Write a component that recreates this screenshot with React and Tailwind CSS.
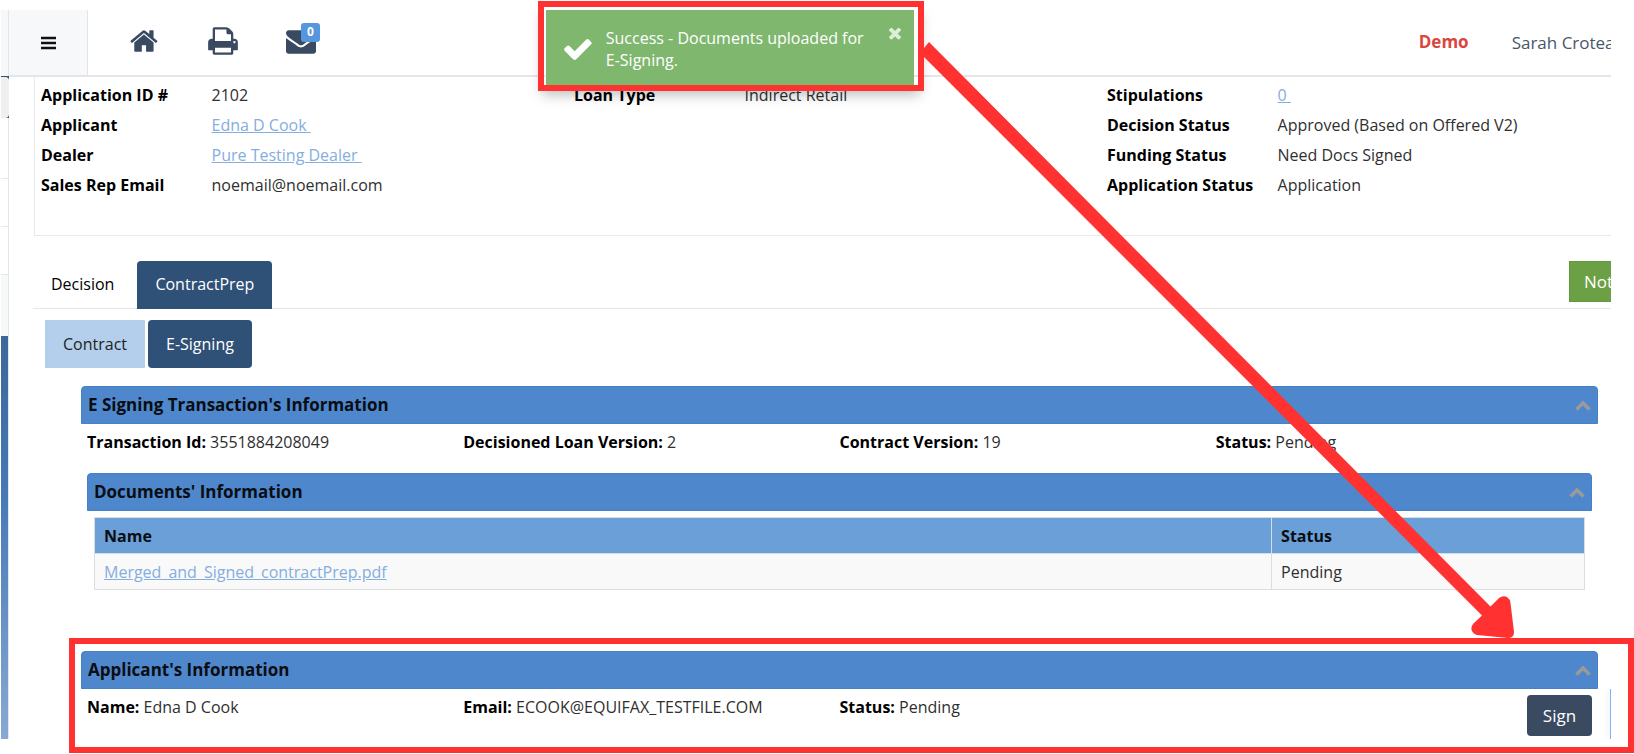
const RED = "#ff3131";

const ICONS = {
  home: "M1408 992v480q0 26-19 45t-45 19h-384v-384h-256v384h-384q-26 0-45-19t-19-45v-480q0-1 .5-3t.5-3l575-474 575 474q1 2 1 6zm223-69l-62 74q-8 9-21 11h-3q-13 0-21-7l-692-577-692 577q-12 8-24 7-13-2-21-11l-62-74q-8-10-7-23.5t11-21.5l719-599q32-26 76-26t76 26l244 204v-195q0-14 9-23t23-9h192q14 0 23 9t9 23v408l219 182q10 8 11 21.5t-7 23.5z",
  print: "M448 1536h896v-256h-896v256zm0-640h896v-384h-160q-40 0-68-28t-28-68v-160h-640v640zm1152 64q0-26-19-45t-45-19-45 19-19 45 19 45 45 19 45-19 19-45zm128 0v416q0 13-9.5 22.5t-22.5 9.5h-224v160q0 40-28 68t-68 28h-960q-40 0-68-28t-28-68v-160h-224q-13 0-22.5-9.5t-9.5-22.5v-416q0-79 56.5-135.5t135.5-56.5h64v-544q0-40 28-68t68-28h672q40 0 88 20t76 48l152 152q28 28 48 76t20 88v256h64q79 0 135.5 56.5t56.5 135.5z",
  mail: "M1792 710v794q0 66-47 113t-113 47h-1472q-66 0-113-47t-47-113v-794q44 49 101 87 362 246 497 345 57 42 92.5 65.5t94.5 48 110 24.5h2q51 0 110-24.5t94.5-48 92.5-65.5q170-123 498-345 57-39 100-87zm0-294q0 79-49 151t-122 123q-376 261-468 325-10 7-42.5 31t-54 38.5-52 32.5-57.5 27-50 9h-2q-23 0-50-9t-57.5-27-52-32.5-54-38.5-42.5-31q-91-64-262-182.5t-205-142.5q-62-42-117-115.5t-55-136.5q0-78 41.5-130t118.5-52h1472q65 0 112.5 47t47.5 113z",
  check: "M1671 566q0 40-28 68l-724 724-136 136q-28 28-68 28t-68-28l-136-136-362-362q-28-28-28-68t28-68l136-136q28-28 68-28t68 28l294 295 656-657q28-28 68-28t68 28l136 136q28 28 28 68z",
  times: "M1490 1322q0 40-28 68l-136 136q-28 28-68 28t-68-28l-294-294-294 294q-28 28-68 28t-68-28l-136-136q-28-28-28-68t28-68l294-294-294-294q-28-28-28-68t28-68l136-136q28-28 68-28t68 28l294 294 294-294q28-28 68-28t68 28l136 136q28 28 28 68t-28 68l-294 294 294 294q28 28 28 68z",
};

function Icon({ name, className }) {
  return (
    <svg viewBox="0 0 1792 1792" className={className} fill="currentColor" aria-hidden="true">
      <path d={ICONS[name]} />
    </svg>
  );
}

function Chevron() {
  return (
    <svg viewBox="0 0 16 12" className="h-3 w-4" fill="none" stroke="#9a9a9a" strokeWidth="3.6" aria-hidden="true">
      <path d="M1.5 10.5 8 4 14.5 10.5" />
    </svg>
  );
}

function ALink({ children }) {
  return (
    <a href="#" className="whitespace-pre text-[#84aede] underline">
      {children}
    </a>
  );
}

const SUMMARY = [
  [
    ["Application ID #", "2102"],
    ["Applicant", <ALink>{"Edna D Cook "}</ALink>],
    ["Dealer", <ALink>{"Pure Testing Dealer "}</ALink>],
    ["Sales Rep Email", "noemail@noemail.com"],
  ],
  [["Loan Type", "Indirect Retail"]],
  [
    ["Stipulations", <ALink>{"0 "}</ALink>],
    ["Decision Status", "Approved (Based on Offered V2)"],
    ["Funding Status", "Need Docs Signed"],
    ["Application Status", "Application"],
  ],
];

function Sidebar() {
  return (
    <aside className="flex w-[9px] shrink-0 flex-col border-r border-[#e4e6e8] pl-px">
      <div className="h-[66px] bg-[#f7f8fa]" />
      <div className="-mr-px bg-[#2e5077]">
        <div className="h-[42px] rounded-r border-t border-[#2e5077] bg-[#efefef]" />
      </div>
      <div className="h-[61px] border-b border-[#e8e8e8]" />
      <div className="h-12 border-b border-[#e8e8e8]" />
      <div className="h-12 border-b border-[#e8e8e8]" />
      <div className="h-[61px] bg-[#f7f8fa]" />
      <div className="grow bg-linear-to-b from-[#3c6799] via-[#4679b8] via-40% to-[#88a9d3]" />
    </aside>
  );
}

function Header() {
  return (
    <header className="flex h-[67px] items-stretch border-b-2 border-[#e4e6ea]">
      <button aria-label="Menu" className="flex w-[79px] items-center border-r border-[#e1e5e3] bg-[#f7f8fa] pl-8">
        <svg viewBox="0 0 15 14" className="h-[14px] w-[15px]" stroke="#111" strokeWidth="2.6" aria-hidden="true">
          <path d="M0 2h15M0 7h15M0 12h15" />
        </svg>
      </button>
      <nav className="flex items-center gap-[47px] pb-1 pl-[42px] text-[#3a4a61]">
        <a href="#" aria-label="Home"><Icon name="home" className="size-[30px]" /></a>
        <a href="#" aria-label="Print"><Icon name="print" className="size-8" /></a>
        <a href="#" aria-label="Messages" className="relative">
          <Icon name="mail" className="size-[30px]" />
          <span className="absolute -top-[3px] left-[15px] flex h-[19px] w-[19px] items-center justify-center rounded-[3px] bg-[#5596de] text-xs font-bold text-white">0</span>
        </a>
      </nav>
      <div className="-mr-[14px] ml-auto flex items-center gap-[43px] text-[17px] whitespace-nowrap">
        <span className="pb-[2px] font-bold text-[#d9463d]">Demo</span>
        <span className="text-[#48566b]">Sarah Croteau</span>
      </div>
    </header>
  );
}

function Summary() {
  return (
    <section className="ml-[25px] grid h-[159px] grid-cols-3 content-start border border-t-0 border-[#e9e9eb] px-[6px] pt-[3px]">
      {SUMMARY.map((rows, i) => (
        <dl key={i}>
          {rows.map(([label, value]) => (
            <div key={label} className="flex h-[30px] items-center">
              <dt className="w-[32%] font-bold text-black">{label}</dt>
              <dd>{value}</dd>
            </div>
          ))}
        </dl>
      ))}
    </section>
  );
}

function PanelTitle({ children }) {
  return (
    <div className="flex h-[38px] items-center justify-between rounded-t border border-[#4580c8] bg-[#4e87cc] px-[6px]">
      <h2 className="text-[17px] font-bold text-[#0a0d12]">{children}</h2>
      <button aria-label="Collapse"><Chevron /></button>
    </div>
  );
}

function Field({ label, children }) {
  return (
    <p>
      <span className="font-bold text-black">{label}</span> {children}
    </p>
  );
}

export default function App() {
  return (
    <div className="relative bg-white pt-[10px] pr-[23px] pb-[15px] font-['Open_Sans','Noto_Sans',sans-serif] text-base leading-6 text-[#2f2f2f]">
      <div className="flex overflow-hidden">
        <Sidebar />
        <div className="min-w-0 grow">
          <Header />
          <main>
            <div className="-mr-9">
              <Summary />
            </div>

            <div className="mt-[25px] -mr-9 ml-6 flex h-12 items-start border-b border-[#e6e6e6]">
              <button className="h-[46px] px-[18px] text-black">Decision</button>
              <button className="ml-[5px] h-12 rounded-t bg-[#2f5077] px-[18px] pb-[2px] text-white">ContractPrep</button>
              <button className="ml-auto h-[41px] w-[78px] border border-[#64983f] bg-[#6ca045] pl-[14px] text-left text-[17px] text-white">Notes</button>
            </div>

            <div className="mt-[11px] ml-9 flex gap-[3px]">
              <button className="h-12 bg-[#b3cfeb] px-[18px] text-[#222]">Contract</button>
              <button className="h-12 rounded bg-[#2f5077] px-[18px] text-white">E-Signing</button>
            </div>

            <section className="mt-[18px] mr-[13px] ml-[72px]">
              <PanelTitle>E Signing Transaction's Information</PanelTitle>
              <div className="px-[6px]">
                <div className="grid h-[49px] grid-cols-4 pt-[6px]">
                  <Field label="Transaction Id:">3551884208049</Field>
                  <Field label="Decisioned Loan Version:">2</Field>
                  <Field label="Contract Version:">19</Field>
                  <Field label="Status:">Pending</Field>
                </div>
                <PanelTitle>Documents' Information</PanelTitle>
                <div className="px-[7px] pt-[6px]">
                  <table className="w-full border-collapse text-left">
                    <thead>
                      <tr className="h-9 bg-[#6b9fd8] text-[#0a0d12]">
                        <th className="w-[79%] border border-[#d5dde6] px-[9px] font-bold">Name</th>
                        <th className="border border-[#d5dde6] px-[9px] font-bold">Status</th>
                      </tr>
                    </thead>
                    <tbody>
                      <tr className="h-9 bg-[#f9f9f9]">
                        <td className="border border-[#dddddd] px-[9px]"><ALink>Merged_and_Signed_contractPrep.pdf</ALink></td>
                        <td className="border border-[#dddddd] px-[9px]">Pending</td>
                      </tr>
                    </tbody>
                  </table>
                </div>
              </div>
            </section>

            <section className="mt-[61px] mr-[13px] ml-[72px]">
              <PanelTitle>Applicant's Information</PanelTitle>
              <div className="relative grid h-[50px] grid-cols-4 px-[6px] pt-[6px]">
                <Field label="Name:">Edna D Cook</Field>
                <Field label="Email:">ECOOK@EQUIFAX_TESTFILE.COM</Field>
                <Field label="Status:">Pending</Field>
                <button className="h-[41px] w-[65px] justify-self-end rounded bg-[#3a4a61] text-[17px] text-white">Sign</button>
                <div className="absolute top-0 -right-[13px] h-full w-px bg-[#7fb2f0] shadow-[-2px_0_4px_rgba(0,0,0,0.15)]" />
              </div>
            </section>
          </main>
        </div>
      </div>

      <div role="status" className="absolute top-px left-[538px] w-[386px] border-[6px] border-[#ff3131] pt-[3px] pr-1 pl-[2px] shadow-[0_8px_12px_-4px_rgba(0,0,0,0.25)]">
        <div className="flex h-[75px] items-center gap-3 bg-[#7fb76f] pt-[2px] pr-[10px] pl-4 text-white">
          <Icon name="check" className="size-8" />
          <p className="w-[270px] leading-[22px]">Success - Documents uploaded for E-Signing.</p>
          <button aria-label="Close" className="ml-auto self-start pt-3 text-[#dcedd8]"><Icon name="times" className="size-[18px]" /></button>
        </div>
      </div>

      <svg viewBox="0 0 1634 754" className="pointer-events-none absolute top-0 left-0 h-[754px] w-[1634px]" fill={RED} aria-hidden="true">
        <path d="M920 53 929 42 1490.500 606.500 1499 598Q1503 595 1507 597Q1510 599 1510.500 603L1514 632Q1514 638 1508 638L1477 635Q1473 634 1471.500 630Q1471 626 1473.500 623.500L1482 615.500Z" />
      </svg>
      <div className="pointer-events-none absolute top-[638px] right-0 left-[69px] h-[115px] border-[6px] border-[#ff3131]" />
    </div>
  );
}
